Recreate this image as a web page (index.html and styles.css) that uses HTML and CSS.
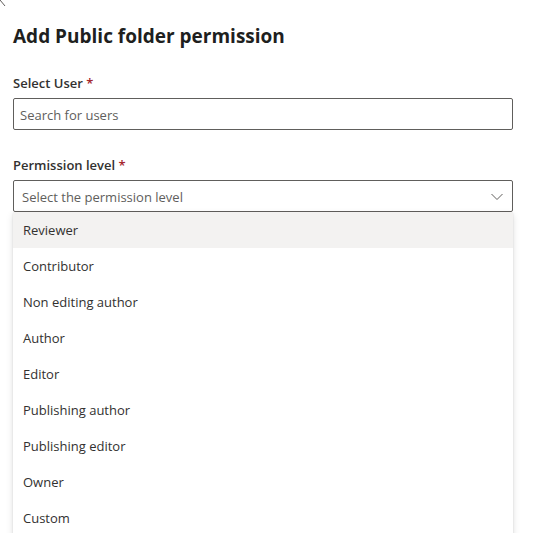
FILE: index.html
```html
<!DOCTYPE html>
<html>
<head>
<meta charset="utf-8">
<link rel="stylesheet" href="styles.css">
</head>
<body>
<div class="panel">
  <svg class="close-frag" width="8" height="8" viewBox="0 0 8 8"><line x1="0" y1="0" x2="5" y2="6" stroke="#605e5c" stroke-width="1"/></svg>
  <h1 class="title">Add Public folder permission</h1>
  <div class="field">
    <label class="label">Select User <span class="req">*</span></label>
    <div class="input"><span class="placeholder">Search for users</span></div>
  </div>
  <div class="field field-2">
    <label class="label">Permission level <span class="req">*</span></label>
    <div class="input select">
      <span class="placeholder">Select the permission level</span>
      <svg class="chevron" width="12" height="8" viewBox="0 0 12 8"><path d="M0.5 1 L6 6.5 L11.5 1" fill="none" stroke="#605e5c" stroke-width="1"/></svg>
    </div>
    <ul class="menu">
      <li class="item active">Reviewer</li>
      <li class="item">Contributor</li>
      <li class="item">Non editing author</li>
      <li class="item">Author</li>
      <li class="item">Editor</li>
      <li class="item">Publishing author</li>
      <li class="item">Publishing editor</li>
      <li class="item">Owner</li>
      <li class="item">Custom</li>
    </ul>
  </div>
</div>
</body>
</html>
```
FILE: styles.css
```css
html, body {
  margin: 0;
  padding: 0;
  background: #fff;
  overflow: hidden;
}
body {
  font-family: "Open Sans", "Noto Sans", sans-serif;
  color: #323130;
}
.panel {
  position: relative;
  padding: 22px 39px 0 13px;
}
.close-frag {
  position: absolute;
  left: 0;
  top: 0;
}
.title {
  margin: 0;
  font-size: 19px;
  line-height: 28px;
  font-weight: 700;
  color: #201f1e;
  letter-spacing: 0;
}
.field {
  margin-top: 18px;
}
.field-2 {
  margin-top: 20px;
}
.label {
  display: block;
  font-size: 13px;
  font-weight: 600;
  line-height: 20px;
  padding: 5px 0;
  color: #323130;
}
.req {
  color: #a4262c;
}
.input {
  box-sizing: border-box;
  height: 32px;
  border: 1px solid #605e5c;
  border-radius: 2px;
  display: flex;
  align-items: center;
  padding: 2px 6px 0 6px;
}
.placeholder {
  font-size: 13px;
  color: #605e5c;
}
.select {
  justify-content: space-between;
  padding: 1px 8px 0 8px;
}
.chevron {
  margin-right: 1px;
}
.menu {
  list-style: none;
  margin: 0;
  padding: 0;
  background: #fff;
  box-shadow: 0 3.2px 7.2px rgba(0,0,0,0.13), 0 0.6px 1.8px rgba(0,0,0,0.11);
}
.item {
  height: 36px;
  line-height: 36px;
  padding: 0 10px;
  font-size: 13px;
  color: #323130;
}
.item.active {
  background: #f3f2f1;
}
```
